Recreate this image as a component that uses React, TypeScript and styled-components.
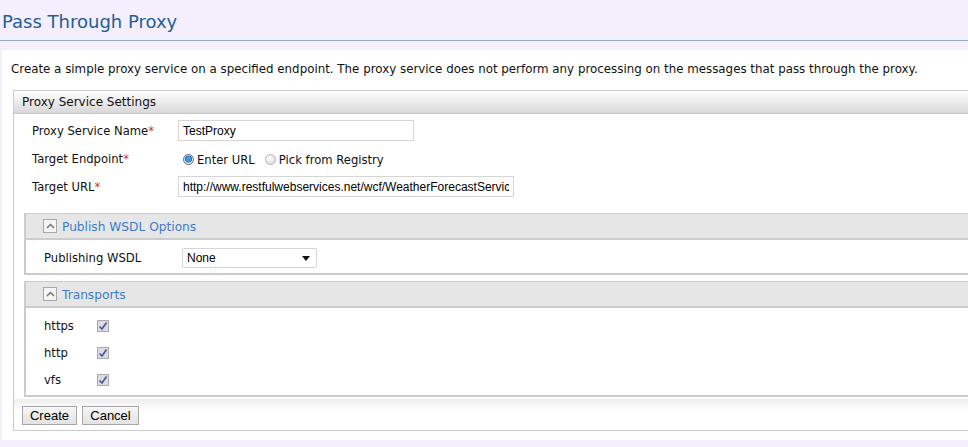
import React from "react";
import styled, { createGlobalStyle } from "styled-components";

const GlobalStyle = createGlobalStyle`
  html, body { margin: 0; padding: 0; }
  body {
    background: #f4eefd;
    font-family: "DejaVu Sans", Verdana, sans-serif;
    font-size: 11.6px;
    color: #111;
    overflow: hidden;
  }
`;

const Page = styled.div`
  width: 968px;
  height: 447px;
  overflow: hidden;
`;

const TitleBar = styled.div`
  height: 40px;
  border-bottom: 1px solid #97a9cb;
  display: flex;
  align-items: center;
  padding-left: 2px;
`;

const Title = styled.h2`
  margin: 0;
  font-weight: normal;
  font-size: 18px;
  color: #215f9b;
  position: relative;
  top: 1px;
`;

const Panel = styled.div`
  margin: 9px 0 0 2px;
  background: #fff;
  height: 390px;
  overflow: hidden;
  padding-top: 11px;
  box-sizing: border-box;
`;

const Description = styled.p`
  margin: 0 0 0 9px;
  height: 17px;
  line-height: 17px;
  font-size: 11.85px;
  white-space: nowrap;
`;

const SettingsBox = styled.div`
  margin: 12px -20px 0 11px;
  border: 1px solid #cccccc;
`;

const SettingsHeader = styled.div`
  height: 22px;
  line-height: 22px;
  padding-left: 8px;
  background: linear-gradient(#ffffff, #d8d8d8);
  border-bottom: 1px solid #c8c8c8;
  font-size: 12px;
`;

const Form = styled.div`
  padding: 6px 0 0 18px;
  display: grid;
  grid-template-columns: 146px 1fr;
`;

const Label = styled.div<{ $h: number }>`
  height: ${(p) => p.$h}px;
  display: flex;
  align-items: center;
`;

const Cell = styled.div<{ $h: number }>`
  height: ${(p) => p.$h}px;
  display: flex;
  align-items: center;
  gap: 4px;
`;

const Req = styled.span`
  color: #e03030;
`;

const TextInput = styled.input<{ $w: number }>`
  width: ${(p) => p.$w}px;
  height: 21px;
  box-sizing: border-box;
  border: 1px solid #d6d6d6;
  padding: 0 4px;
  font-family: "Liberation Sans", Arial, sans-serif;
  font-size: 12px;
  color: #000;
  outline: none;
  background: #fff;
`;

const RadioLabel = styled.label<{ $ml: number }>`
  display: flex;
  align-items: center;
  gap: 3px;
  margin-left: ${(p) => p.$ml}px;
  margin-right: 2px;
  position: relative;
  top: 1px;
`;

const RadioDot = styled.span<{ $on?: boolean }>`
  width: 11px;
  height: 11px;
  border-radius: 50%;
  box-sizing: border-box;
  border: 1px solid ${(p) => (p.$on ? "#5a6d80" : "#b5b5b5")};
  background: ${(p) =>
    p.$on
      ? "radial-gradient(circle at 50% 45%, #3f9be0 0 2.5px, #1e5f99 3.2px, #dfe6ee 3.8px)"
      : "radial-gradient(circle at 40% 35%, #ffffff, #d4d4d4)"};
`;

const SubBox = styled.div<{ $top: number }>`
  margin: ${(p) => p.$top}px 0 0 10px;
  border: 2px solid #cccccc;
  border-top-width: 1px;
  border-right: none;
`;

const SubHeader = styled.div`
  height: 23px;
  box-sizing: content-box;
  padding-top: 1px;
  background: #e6e6e6;
  border-bottom: 2px solid #cccccc;
  display: flex;
  align-items: center;
  padding-left: 17px;
  gap: 5px;
  color: #3b7cc9;
  font-size: 12.2px;
`;

const Toggle = styled.span`
  width: 14px;
  height: 14px;
  box-sizing: border-box;
  border: 1px solid #a8a8a8;
  background: #f4f4f4;
  display: flex;
  align-items: center;
  justify-content: center;
  position: relative;
  top: -1px;
`;

const SubBody = styled.div<{ $h: number; $pt: number }>`
  height: ${(p) => p.$h}px;
  box-sizing: border-box;
  padding: ${(p) => p.$pt}px 0 0 18px;
`;

const Row = styled.div<{ $labelW: number; $h: number }>`
  display: grid;
  grid-template-columns: ${(p) => p.$labelW}px auto;
  height: ${(p) => p.$h}px;
  align-items: center;
`;

const Select = styled.div`
  width: 135px;
  height: 20px;
  box-sizing: border-box;
  border: 1px solid #d6d6d6;
  border-radius: 2px;
  display: flex;
  align-items: center;
  justify-content: space-between;
  padding: 0 6px 0 4px;
  font-family: "Liberation Sans", Arial, sans-serif;
  font-size: 12px;
  color: #000;
`;

const Check = styled.span`
  width: 12px;
  height: 12px;
  box-sizing: border-box;
  border: 1px solid #a9a9a9;
  background: #dcdcdc;
  display: flex;
  align-items: center;
  justify-content: center;
`;

const ButtonBar = styled.div`
  margin-top: 2px;
  height: 31px;
  background: linear-gradient(#eeeeee, #ffffff 40%);
  display: flex;
  align-items: center;
  gap: 5px;
  padding-left: 8px;
  padding-top: 2px;
  box-sizing: border-box;
`;

const Button = styled.button<{ $w: number }>`
  width: ${(p) => p.$w}px;
  height: 19px;
  padding: 0;
  font-family: "Liberation Sans", Arial, sans-serif;
  font-size: 13px;
  color: #000;
  background: linear-gradient(#f6f6f6, #e3e3e3);
  border: 1px solid #a7a7a7;
  border-radius: 0;
`;

const Caret = () => (
  <svg width="9" height="6" viewBox="0 0 9 6">
    <path d="M1 5 L4.5 1.5 L8 5" fill="none" stroke="#6f6f6f" strokeWidth="1.4" />
  </svg>
);

const Arrow = () => (
  <svg width="8" height="5" viewBox="0 0 8 5">
    <path d="M0 0 H8 L4 5 Z" fill="#111" />
  </svg>
);

const Tick = () => (
  <svg width="10" height="10" viewBox="0 0 10 10">
    <path d="M1.5 5.5 L4 8 L8.5 1.5" fill="none" stroke="#3b56b0" strokeWidth="1.6" />
  </svg>
);

const transports = ["https", "http", "vfs"];

export default function App() {
  return (
    <Page>
      <GlobalStyle />
      <TitleBar>
        <Title>Pass Through Proxy</Title>
      </TitleBar>
      <Panel>
        <Description>
          Create a simple proxy service on a specified endpoint. The proxy service does not perform any
          processing on the messages that pass through the proxy.
        </Description>
        <SettingsBox>
          <SettingsHeader>Proxy Service Settings</SettingsHeader>
          <Form>
            <Label $h={21}>
              Proxy Service Name<Req>*</Req>
            </Label>
            <Cell $h={21}>
              <TextInput $w={236} defaultValue="TestProxy" />
            </Cell>
            <Label $h={35}>
              Target Endpoint<Req>*</Req>
            </Label>
            <Cell $h={35}>
              <RadioLabel $ml={5}>
                <RadioDot $on />
                Enter URL
              </RadioLabel>
              <RadioLabel $ml={4}>
                <RadioDot />
                Pick from Registry
              </RadioLabel>
            </Cell>
            <Label $h={21}>
              Target URL<Req>*</Req>
            </Label>
            <Cell $h={21}>
              <TextInput
                $w={336}
                defaultValue="http://www.restfulwebservices.net/wcf/WeatherForecastService.svc?wsdl"
              />
            </Cell>
          </Form>
          <SubBox $top={16}>
            <SubHeader>
              <Toggle>
                <Caret />
              </Toggle>
              Publish WSDL Options
            </SubHeader>
            <SubBody $h={33} $pt={8}>
              <Row $labelW={138} $h={20}>
                <span>Publishing WSDL</span>
                <Select>
                  <span>None</span>
                  <Arrow />
                </Select>
              </Row>
            </SubBody>
          </SubBox>
          <SubBox $top={6}>
            <SubHeader>
              <Toggle>
                <Caret />
              </Toggle>
              Transports
            </SubHeader>
            <SubBody $h={87} $pt={4}>
              {transports.map((t) => (
                <Row key={t} $labelW={53} $h={27}>
                  <span>{t}</span>
                  <Check>
                    <Tick />
                  </Check>
                </Row>
              ))}
            </SubBody>
          </SubBox>
          <ButtonBar>
            <Button $w={55}>Create</Button>
            <Button $w={57}>Cancel</Button>
          </ButtonBar>
        </SettingsBox>
      </Panel>
    </Page>
  );
}
